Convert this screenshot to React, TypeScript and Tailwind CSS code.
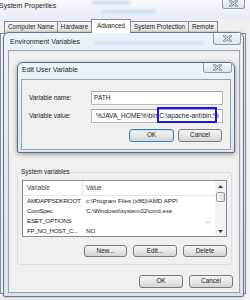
import React from 'react';

const tabs = [
  { name: 'Computer Name', width: 'w-[54px]', active: false },
  { name: 'Hardware', width: 'w-[35px]', active: false },
  { name: 'Advanced', width: 'w-[40px]', active: true },
  { name: 'System Protection', width: 'w-[59px]', active: false },
  { name: 'Remote', width: 'w-[30px]', active: false },
];

const systemVars = [
  { name: 'AMDAPPSDKROOT', value: 'c:\\Program Files (x86)\\AMD APP\\', right: false },
  { name: 'ComSpec', value: 'C:\\Windows\\system32\\cmd.exe', right: false },
  { name: 'ESET_OPTIONS', value: '...', right: true },
  { name: 'FP_NO_HOST_C...', value: 'NO', right: false },
];

const CloseButton = ({ className }: { className: string }) => (
  <div
    className={`flex items-center justify-center rounded-b-[3px] border border-t-0 border-[#8d9aa8] bg-linear-to-b from-[#f6f8fb] to-[#dde5ee] ${className}`}
  >
    <svg width="9" height="7" viewBox="0 0 9 7">
      <path d="M1.5 1 L7.5 6 M7.5 1 L1.5 6" stroke="#7f8a96" strokeWidth="2.6" strokeLinecap="square" />
      <path d="M1.5 1 L7.5 6 M7.5 1 L1.5 6" stroke="#ffffff" strokeWidth="1" strokeLinecap="square" />
    </svg>
  </div>
);

const WinButton = ({ label, className, primary = false }: { label: string; className: string; primary?: boolean }) => (
  <div
    className={`flex items-center justify-center rounded-[3px] border bg-linear-to-b from-[#f4f4f4] via-[#e7e7e7] to-[#d4d4d4] text-[6.4px] leading-none text-[#1a1a1a] ${
      primary ? 'border-[#3c7fb1] shadow-[inset_0_0_0_1px_#bfe2f6]' : 'border-[#7a7a7a]'
    } ${className}`}
  >
    {label}
  </div>
);

const Arrow = ({ down = false }: { down?: boolean }) => (
  <div className="flex h-[10px] items-center justify-center">
    <svg width="5" height="3" viewBox="0 0 5 3">
      <path d={down ? 'M0 0 L5 0 L2.5 3 Z' : 'M0 3 L5 3 L2.5 0 Z'} fill="#3a3a3a" />
    </svg>
  </div>
);

export default function App() {
  return (
    <div className="relative h-[300px] w-[250px] overflow-hidden bg-[#f0f0f0] font-['Liberation_Sans',Arial,sans-serif]">
      {/* System Properties (behind) */}
      <div className="flex h-full flex-col">
        <div className="flex h-[19px] items-start bg-linear-to-b from-[#f7f9fc] to-[#e6edf6]">
          <span className="-ml-[1px] pt-[2px] text-[7px] leading-[8px] text-[#1e1e1e]">System Properties</span>
          <div className="flex flex-1 flex-col pl-[36px] pt-[1px]">
            <div className="h-[3px] w-[38px] rounded-full bg-[#9dbbe4] opacity-60 blur-[1.5px]" />
            <div className="ml-[10px] mt-[6px] h-[3px] w-[54px] rounded-full bg-[#a6c2e8] opacity-50 blur-[1.5px]" />
          </div>
          <CloseButton className="-mt-[2px] mr-[5px] h-[11px] w-[23px]" />
        </div>
        <div className="flex h-[14px] items-end pl-[4px]">
          {tabs.map((tab, i) => (
            <div
              key={tab.name}
              className={`relative flex items-center justify-center border border-b-0 border-[#898c95] text-[6.3px] leading-none text-[#1a1a1a] ${tab.width} ${
                i > 0 ? '-ml-px' : ''
              } ${tab.active ? 'z-10 h-[14px] bg-white' : 'h-[12px] bg-linear-to-b from-[#f3f3f3] to-[#e4e4e4]'}`}
            >
              {tab.name}
            </div>
          ))}
        </div>
        <div className="mb-[6px] mr-[4px] flex-1 border border-[#898c95] bg-white" />
      </div>

      {/* Environment Variables */}
      <div className="absolute left-[3px] top-[32px] flex h-[265px] w-[241px] flex-col rounded-t-[6px] rounded-b-[2px] border border-[#66768a] bg-linear-to-b from-[#eaf1f9] to-[#d8e3ef] shadow-[0_0_3px_rgba(0,0,0,0.3)]">
        <div className="flex h-[17px] items-start">
          <span className="pl-[6px] pt-[5px] text-[7px] leading-[8px] text-[#1e1e1e]">Environment Variables</span>
          <div className="flex-1 pl-[14px] pt-[9px]">
            <div className="h-[2px] w-[110px] rounded-full bg-[#9fbde6] opacity-50 blur-[1.5px]" />
          </div>
          <CloseButton className="mr-[2px] h-[12px] w-[28px]" />
        </div>
        <div className="mb-[3px] ml-[4px] mr-[3px] flex flex-1 flex-col border border-[#97a3b0] bg-[#f0f0f0] pt-[121px]">
          <div className="ml-[8px] flex w-[215px] flex-col rounded-[3px] border border-[#d5dfe5] px-[4px] pb-[7px]">
            <span className="-ml-[2px] -mt-[5px] w-fit bg-[#f0f0f0] px-px text-[6.4px] leading-[8px] text-[#1a1a1a]">
              System variables
            </span>
            <div className="mt-[4px] flex h-[57px] border border-[#828790] bg-white">
              <div className="flex flex-1 flex-col overflow-hidden">
                <div className="flex h-[15px] shrink-0 border-b border-[#e5e5e5] text-[6.3px] text-[#3c3c3c]">
                  <div className="flex w-[60px] items-center border-r border-[#e5e5e5] pl-[4px]">Variable</div>
                  <div className="flex flex-1 items-center pl-[3px]">Value</div>
                </div>
                {systemVars.map((row) => (
                  <div key={row.name} className="flex h-[10px] shrink-0 items-center text-[6.2px] leading-none text-[#1a1a1a]">
                    <div className="w-[60px] whitespace-nowrap pl-[4px] tracking-[-0.25px]">{row.name}</div>
                    <div className={`flex flex-1 whitespace-nowrap pl-[3px] ${row.right ? 'justify-end pr-[5px]' : ''}`}>
                      {row.value}
                    </div>
                  </div>
                ))}
              </div>
              <div className="flex w-[11px] flex-col bg-[#f2f2f2]">
                <Arrow />
                <div className="mx-[1px] mt-[1px] h-[10px] rounded-[2px] border border-[#979797] bg-linear-to-r from-[#f4f4f4] to-[#dcdcdc]" />
                <div className="flex-1" />
                <Arrow down />
              </div>
            </div>
            <div className="mt-[8px] flex justify-end gap-[6px]">
              <WinButton label="New..." className="h-[12px] w-[43px]" />
              <WinButton label="Edit..." className="h-[12px] w-[44px]" />
              <WinButton label="Delete" className="h-[12px] w-[44px]" />
            </div>
          </div>
          <div className="mr-[6px] mt-[10px] flex justify-end gap-[6px]">
            <WinButton label="OK" className="h-[13px] w-[44px]" />
            <WinButton label="Cancel" className="h-[13px] w-[44px]" />
          </div>
        </div>
      </div>

      {/* Edit User Variable */}
      <div className="absolute left-[17px] top-[62px] flex h-[91px] w-[218px] flex-col rounded-t-[6px] rounded-b-[2px] border border-[#5d6d7e] bg-linear-to-b from-[#edf3fa] to-[#dbe6f2] shadow-[0_1px_5px_rgba(0,0,0,0.4)]">
        <div className="flex h-[16px] items-start">
          <span className="pl-[4px] pt-[3px] text-[7px] leading-[8px] text-[#1e1e1e]">Edit User Variable</span>
          <div className="flex-1" />
          <CloseButton className="mr-[2px] h-[10px] w-[29px]" />
        </div>
        <div className="mb-[2px] ml-[3px] mr-[3px] flex flex-1 flex-col border border-[#97a3b0] bg-[#f0f0f0] pl-[7px] pr-[7px] pt-[11px]">
          <div className="flex h-[14px] items-center">
            <span className="w-[62px] text-[6.4px] leading-none text-[#1a1a1a]">Variable name:</span>
            <div className="flex h-full flex-1 items-center border border-[#b5bac2] border-t-[#9ea3ab] bg-white pl-[2px] text-[6.6px] leading-none text-[#1a1a1a]">
              PATH
            </div>
          </div>
          <div className="mt-[4px] flex h-[14px] items-center">
            <span className="w-[62px] text-[6.4px] leading-none text-[#1a1a1a]">Variable value:</span>
            <div className="flex h-full flex-1 items-center whitespace-nowrap border border-[#b5bac2] border-t-[#9ea3ab] bg-white pl-[4px] text-[6.6px] leading-none text-[#1a1a1a]">
              %JAVA_HOME%\bin;C:\apache-ant\bin;%
            </div>
          </div>
          <div className="mr-[1px] mt-[6px] flex justify-end gap-[4px]">
            <WinButton label="OK" className="h-[13px] w-[45px]" primary />
            <WinButton label="Cancel" className="h-[13px] w-[44px]" />
          </div>
        </div>
      </div>

      {/* annotation */}
      <div className="absolute left-[157px] top-[107px] h-[16px] w-[60px] border-2 border-[#1717e8]" />
    </div>
  );
}
